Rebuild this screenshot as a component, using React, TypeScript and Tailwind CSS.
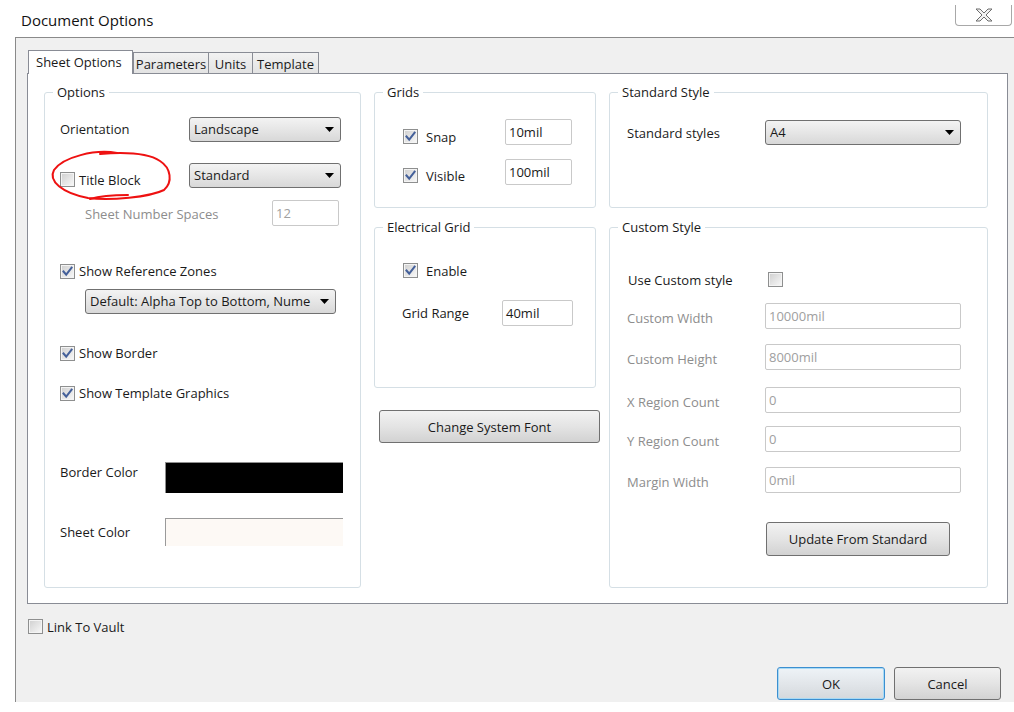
import type { ReactNode } from "react";

function Check({ checked = false }: { checked?: boolean }) {
  return (
    <span className="flex h-[15px] w-[15px] shrink-0 items-center justify-center border border-[#8e8f8f] bg-[#f4f4f4]">
      <span className="flex h-[13px] w-[13px] items-center justify-center border border-[#f4f4f4] bg-gradient-to-br from-[#d2d2d2] to-[#f6f6f6]">
        {checked && (
          <svg width="11" height="11" viewBox="0 0 11 11" fill="none">
            <path d="M1.5 5.5 L4.2 8.6 L9.6 1.6" stroke="#44609a" strokeWidth="2" strokeLinecap="square" />
          </svg>
        )}
      </span>
    </span>
  );
}

function Select({ value, w }: { value: string; w: string }) {
  return (
    <div className={`${w} flex h-[25px] items-center justify-between rounded-[3px] border border-[#707070] bg-gradient-to-b from-[#f3f3f3] via-[#e6e6e6] to-[#d8d8d8] pl-[4px] pr-[6px] text-[#1a1a1a]`}>
      <span className="whitespace-nowrap pb-[1px]">{value}</span>
      <svg width="9" height="5" viewBox="0 0 9 5">
        <path d="M0 0 H9 L4.5 5 Z" fill="#000" />
      </svg>
    </div>
  );
}

function Field({ value, w, disabled = false }: { value: string; w: string; disabled?: boolean }) {
  return (
    <div className={`${w} flex h-[26px] shrink-0 items-center rounded-[2px] border border-[#c9c9c9] bg-white pb-[1px] pl-[3px] ${disabled ? "text-[#a0a0a0]" : "text-[#1a1a1a]"}`}>
      {value}
    </div>
  );
}

function Button({ label, className = "" }: { label: string; className?: string }) {
  return (
    <div className={`flex items-center justify-center rounded-[3px] border border-[#707070] bg-gradient-to-b from-[#f2f2f2] via-[#e4e4e4] to-[#d2d2d2] text-[#1a1a1a] ${className}`}>
      {label}
    </div>
  );
}

function Group({ title, className, children }: { title: string; className: string; children: ReactNode }) {
  return (
    <fieldset className={`rounded-[3px] border border-[#d5dfe5] ${className}`}>
      <legend className="ml-[8px] px-[4px] leading-[18px] text-[#1a1a1a]">{title}</legend>
      {children}
    </fieldset>
  );
}

export default function App() {
  return (
    <div className="relative h-[712px] w-[1014px] overflow-hidden bg-white font-['Open_Sans',sans-serif] text-[13px] leading-[18px] text-[#1a1a1a]">
      {/* title bar */}
      <div className="flex h-[37px] justify-between">
        <span className="pl-[21px] pt-[10px] text-[15px] leading-[20px] text-[#111]">Document Options</span>
        <div className="mr-[2px] mt-[5px] flex h-[21px] w-[57px] items-center justify-center rounded-b-[4px] border border-t-0 border-[#a8a8a8] bg-white">
          <svg width="18" height="14" viewBox="0 0 18 14">
            <path d="M1 1 H5 L9 5 L13 1 H17 L11 7 L17 13 H13 L9 9 L5 13 H1 L7 7 Z" fill="#f2f2f2" stroke="#6d6d6d" strokeWidth="1" strokeLinejoin="round" />
          </svg>
        </div>
      </div>

      {/* window body */}
      <div className="ml-[15px] h-[665px] border-l border-t border-[#8a8a8a] bg-[#f0f0f0] pl-[11px] pt-[12px]">
        <div className="relative z-10 mb-[-1px] flex h-[24px] items-end">
          <div className="ml-[1px] flex h-[24px] w-[105px] items-center border border-b-0 border-[#898c95] bg-white pb-[1px] pl-[7px]">Sheet Options</div>
          <div className="flex h-[22px] w-[76px] items-center justify-center border border-[#898c95] bg-gradient-to-b from-[#f2f2f2] to-[#e3e3e3] pt-[1px]">Parameters</div>
          <div className="flex h-[22px] w-[44px] items-center justify-center border border-l-0 border-[#898c95] bg-gradient-to-b from-[#f2f2f2] to-[#e3e3e3] pt-[1px]">Units</div>
          <div className="flex h-[22px] w-[66px] items-center justify-center border border-l-0 border-[#898c95] bg-gradient-to-b from-[#f2f2f2] to-[#e3e3e3] pt-[1px]">Template</div>
        </div>

        <div className="flex h-[531px] w-[981px] border border-[#898c95] bg-white pl-[16px] pt-[9px]">
          {/* Options */}
          <Group title="Options" className="h-[505px] w-[317px] shrink-0">
            <div className="mt-[16px] flex h-[25px] items-center pl-[15px]">
              <span className="w-[129px] pb-[2px]">Orientation</span>
              <Select value="Landscape" w="w-[152px]" />
            </div>
            <div className="mt-[21px] flex h-[25px] items-start pl-[15px]">
              <div className="mt-[9px] flex h-[15px] w-[129px] items-center gap-[4px]">
                <Check />
                <span>Title Block</span>
              </div>
              <Select value="Standard" w="w-[152px]" />
            </div>
            <div className="mt-[12px] flex h-[26px] items-center pl-[40px] text-[#8d8d8d]">
              <span className="w-[187px] pt-[1px]">Sheet Number Spaces</span>
              <Field value="12" w="w-[67px]" disabled />
            </div>
            <div className="mt-[38px] flex h-[15px] items-center gap-[4px] pl-[15px]">
              <Check checked />
              <span className="pb-[1px]">Show Reference Zones</span>
            </div>
            <div className="mt-[10px] pl-[40px]">
              <Select value="Default: Alpha Top to Bottom, Nume" w="w-[251px]" />
            </div>
            <div className="mt-[32px] flex h-[15px] items-center gap-[4px] pl-[15px]">
              <Check checked />
              <span className="pb-[1px]">Show Border</span>
            </div>
            <div className="mt-[25px] flex h-[15px] items-center gap-[4px] pl-[15px]">
              <Check checked />
              <span className="pb-[1px]">Show Template Graphics</span>
            </div>
            <div className="mt-[61px] flex h-[31px] items-start pl-[15px]">
              <span className="w-[105px] pt-[1px]">Border Color</span>
              <div className="h-[31px] w-[178px] border-l border-t border-[#8f8f8f] bg-black" />
            </div>
            <div className="mt-[25px] flex h-[28px] items-start pl-[15px]">
              <span className="w-[105px] pt-[5px]">Sheet Color</span>
              <div className="h-[28px] w-[178px] border-l border-t border-[#9a9a9a] bg-[#fdf9f5]" />
            </div>
          </Group>

          {/* middle column */}
          <div className="ml-[13px] w-[226px] shrink-0">
            <Group title="Grids" className="h-[125px] w-[222px]">
              <div className="mt-[18px] flex h-[26px] items-start pl-[28px]">
                <div className="mt-[10px] flex h-[15px] w-[102px] items-center gap-[8px]">
                  <Check checked />
                  <span>Snap</span>
                </div>
                <Field value="10mil" w="w-[67px]" />
              </div>
              <div className="mt-[14px] flex h-[26px] items-start pl-[28px]">
                <div className="mt-[9px] flex h-[15px] w-[102px] items-center gap-[8px]">
                  <Check checked />
                  <span>Visible</span>
                </div>
                <Field value="100mil" w="w-[67px]" />
              </div>
            </Group>
            <Group title="Electrical Grid" className="mt-[10px] h-[170px] w-[222px]">
              <div className="mt-[27px] flex h-[15px] items-center gap-[8px] pl-[28px]">
                <Check checked />
                <span>Enable</span>
              </div>
              <div className="mt-[22px] flex h-[26px] items-center pl-[27px]">
                <span className="w-[100px]">Grid Range</span>
                <Field value="40mil" w="w-[71px]" />
              </div>
            </Group>
            <Button label="Change System Font" className="ml-[5px] mt-[22px] h-[33px] w-[221px]" />
          </div>

          {/* right column */}
          <div className="ml-[9px] w-[379px] shrink-0">
            <Group title="Standard Style" className="h-[125px] w-[379px]">
              <div className="mt-[19px] flex h-[25px] items-center pl-[17px]">
                <span className="w-[138px]">Standard styles</span>
                <Select value="A4" w="w-[196px]" />
              </div>
            </Group>
            <Group title="Custom Style" className="mt-[10px] h-[370px] w-[379px]">
              <div className="mt-[36px] flex h-[15px] items-center pl-[18px]">
                <span className="w-[140px]">Use Custom style</span>
                <Check />
              </div>
              {[
                ["Custom Width", "10000mil", "mt-[16px]"],
                ["Custom Height", "8000mil", "mt-[15px]"],
                ["X Region Count", "0", "mt-[17px]"],
                ["Y Region Count", "0", "mt-[13px]"],
                ["Margin Width", "0mil", "mt-[15px]"],
              ].map(([label, value, mt]) => (
                <div key={label} className={`${mt} flex h-[26px] items-center pl-[17px]`}>
                  <span className="w-[138px] pt-[3px] text-[#8d8d8d]">{label}</span>
                  <Field value={value} w="w-[196px]" disabled />
                </div>
              ))}
              <Button label="Update From Standard" className="ml-[156px] mt-[29px] h-[34px] w-[184px]" />
            </Group>
          </div>
        </div>

        <div className="ml-[1px] mt-[15px] flex h-[15px] items-center gap-[4px]">
          <Check />
          <span>Link To Vault</span>
        </div>

        <div className="mt-[33px] flex justify-end gap-[9px] pr-[13px]">
          <div className="flex h-[33px] w-[108px] items-center justify-center rounded-[3px] border border-[#3c8fd0] bg-gradient-to-b from-[#eef3f7] via-[#e2e6ea] to-[#d4d8dc] shadow-[inset_0_0_0_1px_#a8daf5]">
            OK
          </div>
          <Button label="Cancel" className="h-[33px] w-[107px]" />
        </div>
      </div>

      {/* red hand-drawn annotation */}
      <svg className="pointer-events-none absolute left-0 top-0" width="1014" height="712" viewBox="0 0 1014 712" fill="none">
        <path
          d="M117 153 C 95 149, 63 157, 54 170 C 48 181, 62 193, 88 198 C 110 201, 150 197, 164 190 C 173 182, 171 168, 160 161 C 148 153, 125 152, 100 154"
          stroke="#ee1111"
          strokeWidth="2"
          strokeLinecap="round"
        />
        <path d="M90 199 C 100 196, 115 195, 128 195" stroke="#ee1111" strokeWidth="2" strokeLinecap="round" />
      </svg>
    </div>
  );
}
